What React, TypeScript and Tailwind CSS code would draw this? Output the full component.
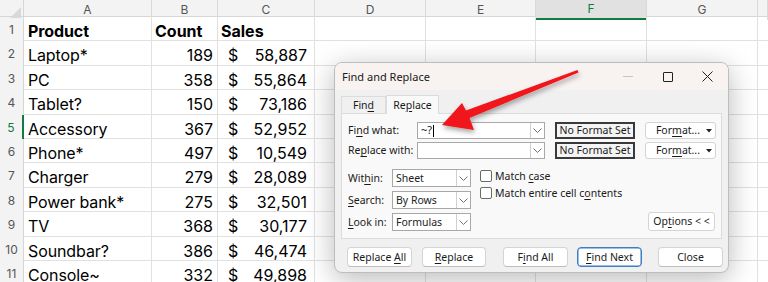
import React from "react";

const rows = [
  ["Laptop*", "189", "58,887"],
  ["PC", "358", "55,864"],
  ["Tablet?", "150", "73,186"],
  ["Accessory", "367", "52,952"],
  ["Phone*", "497", "10,549"],
  ["Charger", "279", "28,089"],
  ["Power bank*", "275", "32,501"],
  ["TV", "368", "30,177"],
  ["Soundbar?", "386", "46,474"],
  ["Console~", "332", "49,898"],
];

const cols = ["A", "B", "C", "D", "E", "F", "G", ""];
const colsTpl = "grid grid-cols-[24px_128px_66px_97px_111px_110px_111px_111px_1fr]";

function U({ children }: { children: React.ReactNode }) {
  return <span className="underline underline-offset-2">{children}</span>;
}

function Chevron() {
  return (
    <svg width="9" height="5" viewBox="0 0 9 5" className="text-[#707070]">
      <path d="M0.5 0.5 L4.5 4.5 L8.5 0.5" fill="none" stroke="currentColor" strokeWidth="1" />
    </svg>
  );
}

function Combo({ value, w, h = "h-[18px]" }: { value?: React.ReactNode; w: string; h?: string }) {
  return (
    <div className={`${w} ${h} flex border border-[#a8a8a8] bg-white`}>
      <div className="flex-1 flex items-center pl-[3px] text-[#222]">{value}</div>
      <div className="w-[14px] border-l border-[#d0d0d0] flex items-center justify-center">
        <Chevron />
      </div>
    </div>
  );
}

function Btn({ children, w, accent }: { children: React.ReactNode; w: string; accent?: boolean }) {
  return (
    <div
      className={`${w} h-[20px] flex items-center justify-center rounded-[4px] bg-white text-[#1a1a1a] ${
        accent ? "border border-[#3c7fc4] shadow-[inset_0_0_0_0.5px_#3c7fc4]" : "border border-[#d4d4d4] border-b-[#bdbdbd]"
      }`}
    >
      <span>{children}</span>
    </div>
  );
}

function NoFormat() {
  return (
    <div className="w-[80px] h-[17px] flex items-center justify-center border-2 border-[#3a3a3a] bg-[#f4f4f4] text-[#1a1a1a]">
      No Format Set
    </div>
  );
}

function FormatBtn() {
  return (
    <div className="w-[71px] h-[17px] flex items-center justify-end pr-[3px] gap-[6px] rounded-[3px] border border-[#d4d4d4] bg-white text-[#1a1a1a]">
      <span>
        For<U>m</U>at...
      </span>
      <svg width="6" height="4" viewBox="0 0 6 4">
        <path d="M0 0 L6 0 L3 3.5 Z" fill="#222" />
      </svg>
    </div>
  );
}

function Check({ children }: { children: React.ReactNode }) {
  return (
    <div className="flex items-center gap-[3px] h-[12px]">
      <div className="w-[12px] h-[12px] rounded-[2px] border border-[#6a6a6a] bg-white" />
      <span className="text-[#1a1a1a]">{children}</span>
    </div>
  );
}

export default function App() {
  return (
    <div className="relative w-[768px] h-[282px] overflow-hidden bg-white font-['Inter',sans-serif]">
      {/* column headers */}
      <div className={`${colsTpl} h-[17px] bg-[#f3f3f3] border-b border-[#d6d6d6]`}>
        <div className="relative border-r border-[#d6d6d6]">
          <div className="absolute right-[2px] bottom-[2px] w-0 h-0 border-l-[11px] border-l-transparent border-b-[11px] border-b-[#d9d9d9]" />
        </div>
        {cols.map((c, i) => (
          <div
            key={i}
            className={`flex items-center justify-center text-[12px] border-r border-[#dadada] ${
              c === "F" ? "bg-[#e1e1e1] text-[#107c41] border-b-2 border-b-[#107c41]" : "text-[#555]"
            }`}
          >
            {c}
          </div>
        ))}
      </div>

      {/* rows */}
      {[["Product", "Count", "Sales"], ...rows].map((r, idx) => {
        const n = idx + 1;
        const head = idx === 0;
        return (
          <div key={n} className={`${colsTpl} h-[24.4px] border-b border-[#e1e1e1]`}>
            <div
              className={`flex items-center justify-center bg-[#f3f3f3] text-[12px] ${
                n === 5 ? "text-[#107c41] border-r-2 border-[#107c41]" : "text-[#555] border-r border-[#d6d6d6]"
              }`}
            >
              {n}
            </div>
            <div className={`flex items-center pl-[4px] pt-[2px] text-[16px] tracking-[-0.1px] text-black border-r border-[#e1e1e1] ${head ? "font-bold" : ""}`}>
              {r[0]}
            </div>
            <div
              className={`flex items-center pt-[2px] text-[16px] text-black border-r border-[#e1e1e1] ${
                head ? "font-bold pl-[3px]" : "justify-end pr-[4px]"
              }`}
            >
              {r[1]}
            </div>
            <div
              className={`flex items-center pt-[2px] text-[16px] text-black border-r border-[#e1e1e1] ${
                head ? "font-bold pl-[3px]" : "justify-between pl-[10px] pr-[7px]"
              }`}
            >
              {head ? r[2] : (
                <>
                  <span>$</span>
                  <span>{r[2]}</span>
                </>
              )}
            </div>
            <div className="border-r border-[#e1e1e1]" />
            <div className="border-r border-[#e1e1e1]" />
            <div className="border-r border-[#e1e1e1]" />
            <div className="border-r border-[#e1e1e1]" />
            <div />
          </div>
        );
      })}

      {/* dialog */}
      <div className="absolute left-[334px] top-[62px] w-[395px] h-[211px] rounded-[8px] border border-[#bdbdbd] bg-[#f0f0f0] overflow-hidden shadow-[0_6px_28px_rgba(0,0,0,0.28)] font-['Noto_Sans',sans-serif] text-[10.5px] leading-none">
        {/* title bar */}
        <div className="h-[27px] flex items-center bg-[#f8f2f1] pl-[7px]">
          <span className="text-[11px] text-[#1a1a1a]">Find and Replace</span>
          <div className="ml-auto flex items-center h-full">
            <div className="w-[40px] flex items-center justify-center">
              <div className="w-[10px] h-px bg-[#c4c4c4]" />
            </div>
            <div className="w-[40px] flex items-center justify-center">
              <div className="w-[10px] h-[10px] border border-[#222] rounded-[1px]" />
            </div>
            <div className="w-[40px] flex items-center justify-center pr-[2px]">
              <svg width="11" height="11" viewBox="0 0 11 11">
                <path d="M0.5 0.5 L10.5 10.5 M10.5 0.5 L0.5 10.5" stroke="#222" strokeWidth="1" />
              </svg>
            </div>
          </div>
        </div>

        {/* tabs */}
        <div className="pl-[6px] pt-[6px] flex items-end h-[23px]">
          <div className="w-[45px] h-[17px] flex items-center justify-center border border-b-0 border-[#dcdcdc] bg-[#f0f0f0] text-[#1a1a1a]">
            <span>
              Fin<U>d</U>
            </span>
          </div>
          <div className="w-[53px] h-[19px] flex items-center justify-center border border-b-0 border-[#dcdcdc] bg-[#f9f9f9] text-[#1a1a1a] -mb-px relative z-10">
            <span>
              Re<U>p</U>lace
            </span>
          </div>
        </div>

        {/* panel */}
        <div className="ml-[6px] w-[381px] h-[126px] border border-[#dcdcdc] bg-[#f9f9f9] pl-[6px] pt-[8px] text-[#1a1a1a]">
          <div className="flex items-center h-[17px]">
            <div className="w-[69px]">
              Fi<U>n</U>d what:
            </div>
            <Combo w="w-[128px]" h="h-[17px]" value={<span className="text-[11px]">~?<span className="inline-block w-px h-[12px] bg-black align-middle ml-px" /></span>} />
            <div className="ml-[10px]">
              <NoFormat />
            </div>
            <div className="ml-[10px]">
              <FormatBtn />
            </div>
          </div>
          <div className="flex items-center h-[17px] mt-[3px]">
            <div className="w-[69px]">
              Re<U>p</U>lace with:
            </div>
            <Combo w="w-[128px]" h="h-[17px]" />
            <div className="ml-[10px]">
              <NoFormat />
            </div>
            <div className="ml-[10px]">
              <FormatBtn />
            </div>
          </div>

          <div className="flex mt-[10px]">
            <div className="flex flex-col gap-[4px]">
              <div className="flex items-center">
                <div className="w-[44px]">
                  Wit<U>h</U>in:
                </div>
                <Combo w="w-[79px]" value="Sheet" />
              </div>
              <div className="flex items-center">
                <div className="w-[44px]">
                  <U>S</U>earch:
                </div>
                <Combo w="w-[79px]" value="By Rows" />
              </div>
              <div className="flex items-center">
                <div className="w-[44px]">
                  <U>L</U>ook in:
                </div>
                <Combo w="w-[79px]" value="Formulas" />
              </div>
            </div>
            <div className="ml-[9px] pt-[1px] flex flex-col gap-[5px]">
              <Check>
                Match <U>c</U>ase
              </Check>
              <Check>
                Match entire cell c<U>o</U>ntents
              </Check>
            </div>
            <div className="flex-1 flex items-end justify-end pr-[6px]">
              <div className="w-[67px] h-[19px] flex items-center justify-center rounded-[3px] border border-[#d4d4d4] bg-white text-[#1a1a1a]">
                <span>
                  Op<U>t</U>ions &lt; &lt;
                </span>
              </div>
            </div>
          </div>
        </div>

        {/* buttons */}
        <div className="flex mt-[8px] pl-[12px]">
          <Btn w="w-[65px]">
            Replace <U>A</U>ll
          </Btn>
          <div className="ml-[10px]">
            <Btn w="w-[64px]">
              <U>R</U>eplace
            </Btn>
          </div>
          <div className="ml-[17px]">
            <Btn w="w-[65px]">
              F<U>i</U>nd All
            </Btn>
          </div>
          <div className="ml-[9px]">
            <Btn w="w-[65px]" accent>
              <U>F</U>ind Next
            </Btn>
          </div>
          <div className="ml-[16px]">
            <Btn w="w-[65px]">Close</Btn>
          </div>
        </div>
      </div>

      {/* red arrow */}
      <svg className="absolute left-0 top-0 pointer-events-none" width="768" height="282" viewBox="0 0 768 282">
        <defs>
          <filter id="sh" x="-20%" y="-40%" width="140%" height="180%">
            <feDropShadow dx="1" dy="3" stdDeviation="2.5" floodColor="#000" floodOpacity="0.35" />
          </filter>
        </defs>
        <polygon
          points="442,125 462,103 466,110.5 577.5,70 578.5,72.5 469.5,118 474,130"
          fill="#f0141a"
          filter="url(#sh)"
        />
      </svg>
    </div>
  );
}
